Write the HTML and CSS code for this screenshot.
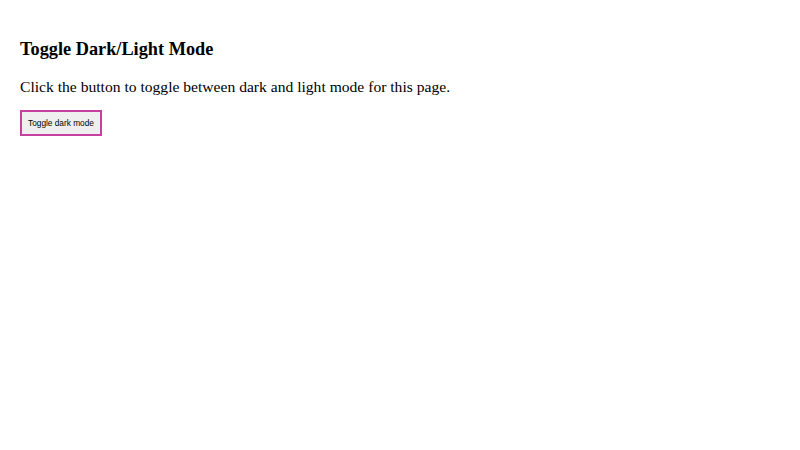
FILE: index.html
```html
<!DOCTYPE html>
<html>
<head>
<meta charset="utf-8">
<link rel="stylesheet" href="styles.css">
</head>
<body class="page">
<h2 class="title">Toggle Dark/Light Mode</h2>
<p class="intro">Click the button to toggle between dark and light mode for this page.</p>
<button class="toggle">Toggle dark mode</button>
</body>
</html>
```
FILE: styles.css
```css
html { background: #ffffff; }
.page {
  margin: 0;
  padding: 20px;
  font-family: "Liberation Serif", "Times New Roman", serif;
  color: #000;
  background: #fff;
}
.title {
  font-size: 18.3px;
  font-weight: bold;
  margin: 19px 0 18px;
}
.intro {
  font-size: 15.6px;
  margin: 18px 0 14px;
}
.toggle {
  display: block;
  font-family: "Liberation Sans", Arial, sans-serif;
  font-size: 8.3px;
  line-height: 10px;
  padding: 6px 6px;
  background: #efefef;
  border: 2px solid #c6409f;
  color: #000;
  border-radius: 0;
}
```
